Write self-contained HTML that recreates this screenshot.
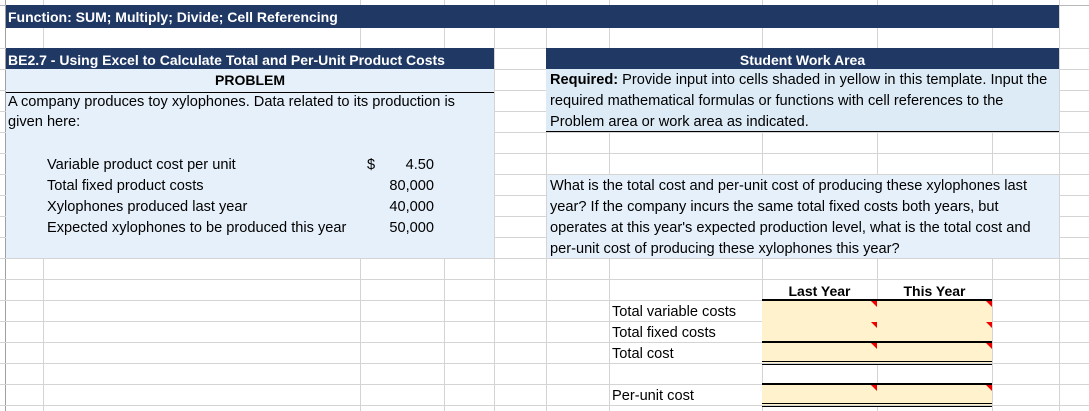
<!DOCTYPE html>
<html><head><meta charset="utf-8"><style>
*{margin:0;padding:0;box-sizing:border-box}
body{width:1089px;height:411px;position:relative;overflow:hidden;background:#fff;font-family:"Liberation Sans",Calibri,sans-serif;font-size:14.6px;color:#000}
.v{position:absolute;top:0;width:1px;height:411px;background:#d4d4d4}
.h{position:absolute;left:0;width:1089px;height:1px;background:#d4d4d4}
.b{position:absolute}
.t{position:absolute;white-space:nowrap;line-height:21px;margin-top:1px}
.bd{font-weight:bold;font-size:14px}
.tri{position:absolute;width:0;height:0;border-top:6px solid #e00;border-left:6px solid transparent}
</style></head><body>
<div class="v" style="left:5px;background:#a0a0a0"></div>
<div class="v" style="left:43px"></div><div class="v" style="left:360px"></div><div class="v" style="left:444px"></div><div class="v" style="left:494px"></div><div class="v" style="left:546px"></div><div class="v" style="left:609px"></div><div class="v" style="left:762px"></div><div class="v" style="left:877px"></div><div class="v" style="left:992px"></div><div class="v" style="left:1059px"></div>
<div class="h" style="top:5px;background:#b8b8b8"></div>
<div class="h" style="top:48px"></div><div class="h" style="top:69px"></div><div class="h" style="top:90px"></div><div class="h" style="top:111px"></div><div class="h" style="top:132px"></div><div class="h" style="top:153px"></div><div class="h" style="top:174px"></div><div class="h" style="top:195px"></div><div class="h" style="top:216px"></div><div class="h" style="top:237px"></div><div class="h" style="top:258px"></div><div class="h" style="top:279px"></div><div class="h" style="top:300px"></div><div class="h" style="top:321px"></div><div class="h" style="top:342px"></div><div class="h" style="top:363px"></div><div class="h" style="top:384px"></div><div class="h" style="top:405px"></div>
<div class="b" style="left:6px;top:5px;width:1053px;height:23px;background:#203864"></div>
<div class="t bd" style="left:8px;top:6px;color:#fff">Function: SUM; Multiply; Divide; Cell Referencing</div>
<div class="b" style="left:6px;top:48px;width:488px;height:210px;background:#e6f0fa"></div>
<div class="b" style="left:6px;top:48px;width:488px;height:21px;background:#203864"></div>
<div class="t bd" style="left:8px;top:49px;color:#fff">BE2.7 - Using Excel to Calculate Total and Per-Unit Product Costs</div>
<div class="t bd" style="left:6px;top:69px;width:488px;text-align:center">PROBLEM</div>
<div class="b" style="left:6px;top:92px;width:488px;height:1px;background:#000"></div>
<div class="t" style="left:8px;top:91px">A company produces toy xylophones. Data related to its production is</div>
<div class="t" style="left:8px;top:111px">given here:</div>
<div class="t" style="left:47px;top:154px">Variable product cost per unit</div>
<div class="t" style="left:47px;top:175px">Total fixed product costs</div>
<div class="t" style="left:47px;top:196px">Xylophones produced last year</div>
<div class="t" style="left:47px;top:217px">Expected xylophones to be produced this year</div>
<div class="t" style="left:367px;top:154px">$</div>
<div class="t" style="left:380px;top:154px;width:54px;text-align:right">4.50</div>
<div class="t" style="left:370px;top:175px;width:64px;text-align:right">80,000</div>
<div class="t" style="left:370px;top:196px;width:64px;text-align:right">40,000</div>
<div class="t" style="left:370px;top:217px;width:64px;text-align:right">50,000</div>
<div class="b" style="left:546px;top:48px;width:513px;height:21px;background:#203864"></div>
<div class="t bd" style="left:546px;top:49px;width:513px;text-align:center;color:#fff">Student Work Area</div>
<div class="b" style="left:546px;top:69px;width:513px;height:63px;background:#ddebf7;border-bottom:1px solid #000"></div>
<div class="t" style="left:550px;top:69px"><b>Required:</b> Provide input into cells shaded in yellow in this template. Input the</div>
<div class="t" style="left:550px;top:90px">required mathematical formulas or functions with cell references to the</div>
<div class="t" style="left:550px;top:111px">Problem area or work area as indicated.</div>
<div class="b" style="left:547px;top:175px;width:512px;height:83px;background:#e6f0fa"></div>
<div class="t" style="left:550px;top:175px">What is the total cost and per-unit cost of producing these xylophones last</div>
<div class="t" style="left:550px;top:196px">year? If the company incurs the same total fixed costs both years, but</div>
<div class="t" style="left:550px;top:217px">operates at this year's expected production level, what is the total cost and</div>
<div class="t" style="left:550px;top:238px">per-unit cost of producing these xylophones this year?</div>
<div class="t bd" style="left:762px;top:280px;width:115px;text-align:center">Last Year</div>
<div class="t bd" style="left:877px;top:280px;width:115px;text-align:center">This Year</div>
<div class="b" style="left:762px;top:300px;width:230px;height:63px;background:#fff2cc"></div>
<div class="b" style="left:762px;top:384px;width:230px;height:21px;background:#fff2cc"></div>
<div class="b" style="left:762px;top:299px;width:230px;height:2px;background:#000"></div>
<div class="b" style="left:762px;top:341px;width:230px;height:2px;background:#000"></div>
<div class="b" style="left:762px;top:361px;width:230px;height:1px;background:#000"></div>
<div class="b" style="left:762px;top:364px;width:230px;height:1px;background:#000"></div>
<div class="b" style="left:762px;top:383px;width:230px;height:2px;background:#000"></div>
<div class="b" style="left:762px;top:403px;width:230px;height:1px;background:#000"></div>
<div class="b" style="left:762px;top:406px;width:230px;height:1px;background:#000"></div>
<div class="tri" style="left:871px;top:301px"></div><div class="tri" style="left:986px;top:301px"></div>
<div class="tri" style="left:871px;top:322px"></div><div class="tri" style="left:986px;top:322px"></div>
<div class="tri" style="left:871px;top:343px"></div><div class="tri" style="left:986px;top:343px"></div>
<div class="tri" style="left:871px;top:385px"></div><div class="tri" style="left:986px;top:385px"></div>
<div class="t" style="left:612px;top:301px">Total variable costs</div>
<div class="t" style="left:612px;top:322px">Total fixed costs</div>
<div class="t" style="left:612px;top:343px">Total cost</div>
<div class="t" style="left:612px;top:385px">Per-unit cost</div>
</body></html>
